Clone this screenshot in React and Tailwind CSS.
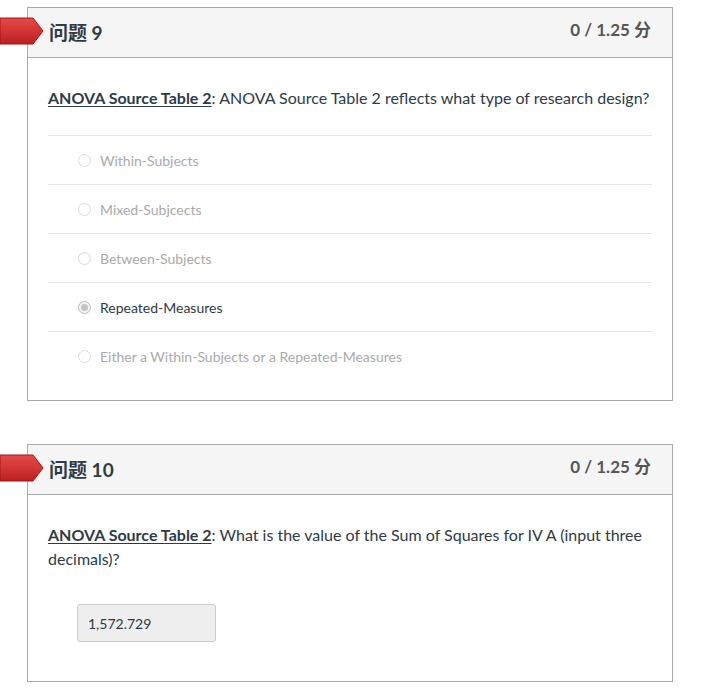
import React from 'react';

const OPTIONS = [
  { label: 'Within-Subjects', selected: false },
  { label: 'Mixed-Subjcects', selected: false },
  { label: 'Between-Subjects', selected: false },
  { label: 'Repeated-Measures', selected: true },
  { label: 'Either a Within-Subjects or a Repeated-Measures', selected: false },
];

const Flag = () => (
  <svg className="absolute left-[-28px] top-[9px]" width="44" height="28" viewBox="0 0 44 28">
    <defs>
      <linearGradient id="flagGrad" x1="0" y1="0" x2="0" y2="1">
        <stop offset="0" stopColor="#e54b4b" />
        <stop offset="1" stopColor="#bd1f1f" />
      </linearGradient>
    </defs>
    <path d="M0 1 H33 L43 14 L33 27 H0 Z" fill="url(#flagGrad)" stroke="#a31515" strokeWidth="1" />
  </svg>
);

const Header = ({ title }) => (
  <div className="relative flex justify-between items-start h-[50px] bg-[#f5f5f5] border-b border-[#aaaaaa] px-[21px]">
    <Flag />
    <h2 className="pt-[12px] text-[19px] font-bold leading-[26px] text-[#2d3b45]">{title}</h2>
    <div className="pt-[11px] text-[17px] font-bold leading-[22px] text-[#555555]">0 / 1.25 分</div>
  </div>
);

const Radio = ({ selected }) => (
  <span
    className={`inline-flex items-center justify-center w-[13px] h-[13px] rounded-full border ${
      selected ? 'border-[#bbbbbb] bg-[#f4f4f4]' : 'border-[#dddddd] bg-white'
    }`}
  >
    {selected && <span className="w-[7px] h-[7px] rounded-full bg-[#c4c4c4]" />}
  </span>
);

export default function App() {
  return (
    <div
      className="bg-white min-h-[700px] pt-[7px] pl-[27px] pr-[51px] text-[#2d3b45]"
      style={{ fontFamily: 'Lato, "Noto Sans CJK SC", sans-serif' }}
    >
      {/* Question 9 */}
      <div className="w-[646px] border border-[#aaaaaa] bg-white">
        <Header title="问题 9" />
        <div className="px-[20px] pt-[28px] pb-[20px]">
          <p className="text-[16px] leading-[24px]">
            <span className="font-bold underline underline-offset-2">ANOVA Source Table 2</span>: ANOVA Source Table 2 reflects what type of research design?
          </p>
          <div className="mt-[25px]">
            {OPTIONS.map((opt) => (
              <div
                key={opt.label}
                className="flex items-center h-[49px] border-t border-[#e6e6e6] pl-[30px] gap-[9px]"
              >
                <Radio selected={opt.selected} />
                <span className={`text-[14px] ${opt.selected ? 'text-[#2d3b45]' : 'text-[#aaaaaa]'}`}>
                  {opt.label}
                </span>
              </div>
            ))}
          </div>
        </div>
      </div>

      {/* Question 10 */}
      <div className="mt-[43px] w-[646px] border border-[#aaaaaa] bg-white">
        <Header title="问题 10" />
        <div className="px-[20px] pt-[28px] pb-[39px]">
          <p className="text-[16px] leading-[24px]">
            <span className="font-bold underline underline-offset-2">ANOVA Source Table 2</span>: What is the value of the Sum of Squares for IV A (input three decimals)?
          </p>
          <div className="mt-[33px] ml-[29px] w-[139px] h-[38px] flex items-center px-[10px] bg-[#eeeeee] border border-[#cccccc] rounded-[3px] text-[14px] text-[#2d3b45]">
            1,572.729
          </div>
        </div>
      </div>
    </div>
  );
}
